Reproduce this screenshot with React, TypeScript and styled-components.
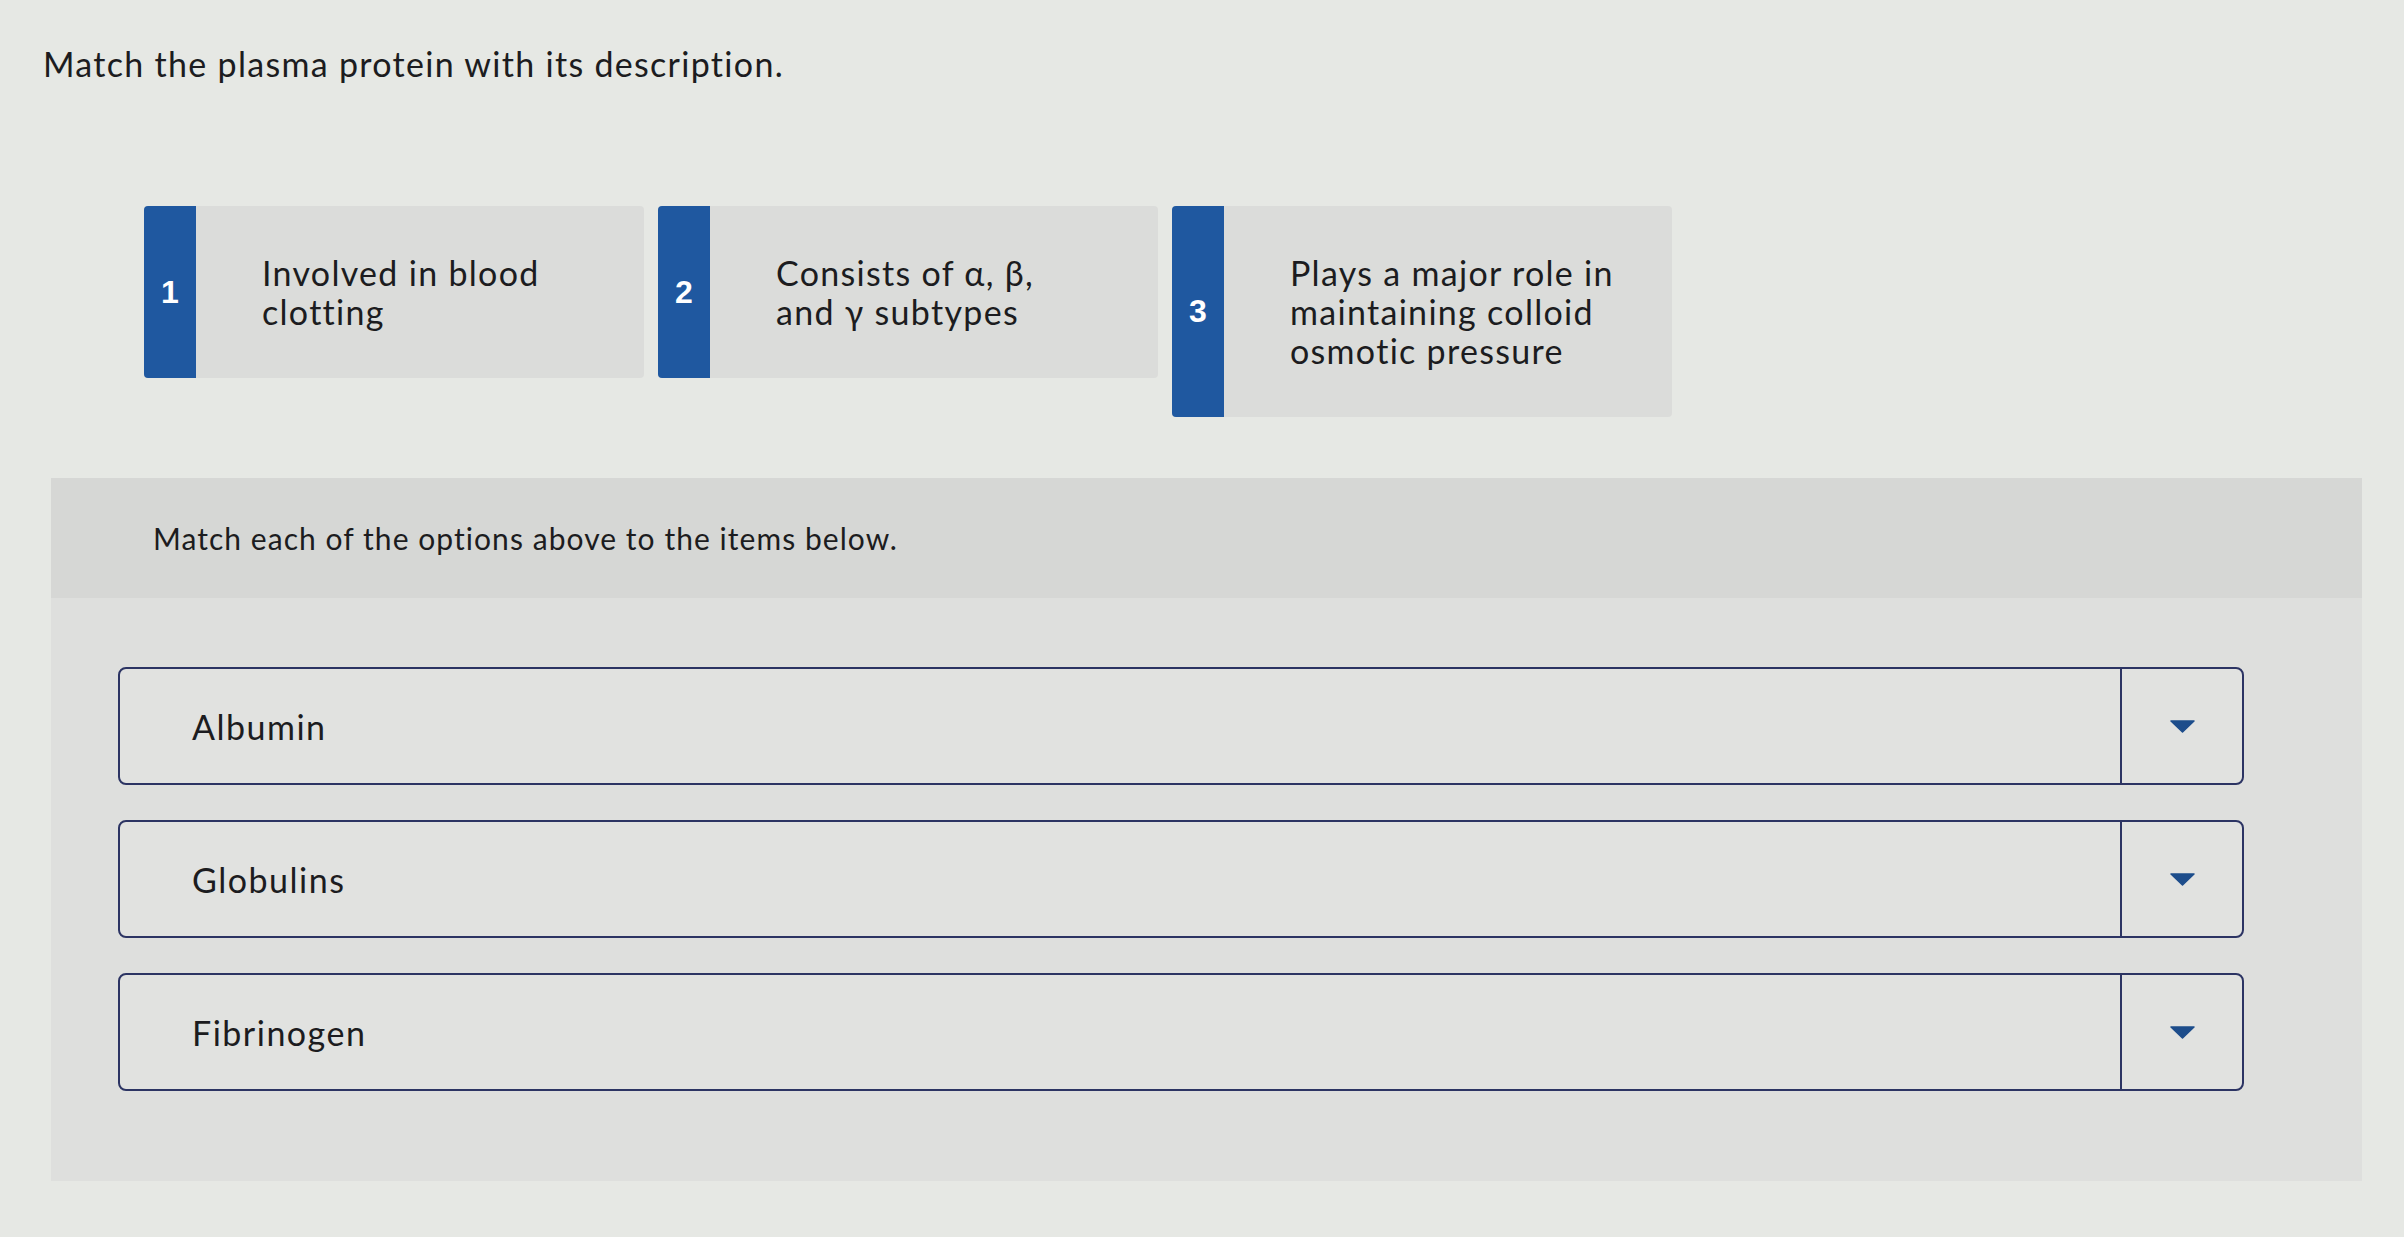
import styled, { createGlobalStyle } from 'styled-components';
import { FC } from 'react';

type Choice = {
	id: number;
	lines: string[];
};

const CHOICES: Choice[] = [
	{ id: 1, lines: ['Involved in blood', 'clotting'] },
	{ id: 2, lines: ['Consists of α, β,', 'and γ subtypes'] },
	{ id: 3, lines: ['Plays a major role in', 'maintaining colloid', 'osmotic pressure'] },
];

const ITEMS = ['Albumin', 'Globulins', 'Fibrinogen'];

const GlobalStyle = createGlobalStyle`
	html, body {
		margin: 0;
		padding: 0;
		background: #e6e8e4;
	}
	body {
		font-family: Lato, 'Noto Sans', Arial, sans-serif;
		color: #1c1c20;
	}
`;

const Caret: FC = () => (
	<svg width="25" height="13" viewBox="0 0 25 13" aria-hidden="true">
		<path d="M1 1 H24 L12.5 12 Z" fill="#1d4d8b" stroke="#1d4d8b" strokeWidth="1.5" strokeLinejoin="round" />
	</svg>
);

const App: FC = () => (
	<>
		<GlobalStyle />
		<Page>
			<Prompt>Match the plasma protein with its description.</Prompt>
			<ChoiceRow>
				{CHOICES.map((choice) => (
					<ChoiceCard key={choice.id}>
						<Tab>{choice.id}</Tab>
						<ChoiceText>
							{choice.lines.map((line) => (
								<Line key={line}>{line}</Line>
							))}
						</ChoiceText>
					</ChoiceCard>
				))}
			</ChoiceRow>
			<MatchPanel>
				<PanelHeader>Match each of the options above to the items below.</PanelHeader>
				<PanelBody>
					{ITEMS.map((item) => (
						<Dropdown key={item}>
							<ItemLabel>{item}</ItemLabel>
							<ArrowBox>
								<Caret />
							</ArrowBox>
						</Dropdown>
					))}
				</PanelBody>
			</MatchPanel>
		</Page>
	</>
);

const Page = styled.div`
	width: 2404px;
	min-height: 1237px;
	box-sizing: border-box;
	padding: 43px 42px 0 43px;
	display: flex;
	flex-direction: column;
`;

const Prompt = styled.div`
	font-size: 34px;
	line-height: 42px;
	letter-spacing: 1.3px;
`;

const ChoiceRow = styled.div`
	display: flex;
	align-items: flex-start;
	gap: 14px;
	margin: 121px 0 0 101px;
`;

const ChoiceCard = styled.div`
	width: 500px;
	display: flex;
	align-items: stretch;
	background: #dbdcda;
	border-radius: 4px;
	overflow: hidden;
`;

const Tab = styled.div`
	width: 52px;
	flex-shrink: 0;
	display: flex;
	align-items: center;
	justify-content: center;
	background: #1f58a0;
	color: #ffffff;
	font-family: 'Liberation Sans', Arial, sans-serif;
	font-weight: 700;
	font-size: 32px;
`;

const ChoiceText = styled.div`
	padding: 47px 20px 47px 66px;
	font-size: 34px;
	line-height: 39px;
	letter-spacing: 1.3px;
`;

const Line = styled.span`
	display: block;
	white-space: nowrap;
`;

const MatchPanel = styled.div`
	margin: 61px 0 0 8px;
	background: #dedfdd;
	display: flex;
	flex-direction: column;
`;

const PanelHeader = styled.div`
	height: 120px;
	display: flex;
	align-items: center;
	padding-left: 102px;
	background: #d6d7d5;
	font-size: 30px;
	letter-spacing: 1.05px;
`;

const PanelBody = styled.div`
	display: flex;
	flex-direction: column;
	gap: 35px;
	padding: 69px 118px 90px 67px;
`;

const Dropdown = styled.div`
	height: 118px;
	box-sizing: border-box;
	display: flex;
	align-items: stretch;
	border: 2px solid #2c3463;
	border-radius: 8px;
	background: #e1e2e0;
`;

const ItemLabel = styled.div`
	flex: 1;
	display: flex;
	align-items: center;
	padding-left: 72px;
	font-size: 34px;
	letter-spacing: 1.5px;
`;

const ArrowBox = styled.div`
	width: 120px;
	flex-shrink: 0;
	display: flex;
	align-items: center;
	justify-content: center;
	border-left: 2px solid #2c3463;
`;

export default App;
